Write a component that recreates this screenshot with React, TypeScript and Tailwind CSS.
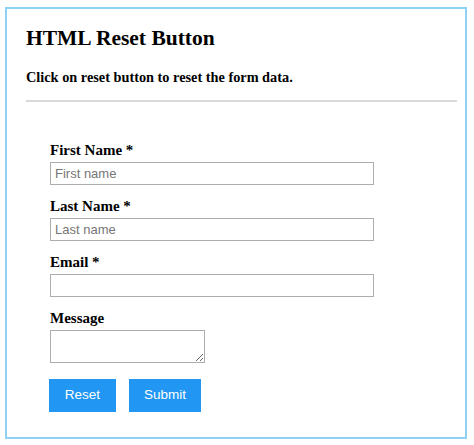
import { useState } from 'react';

const serif = "font-['Liberation_Serif','Times_New_Roman',serif]";
const sans = "font-['Liberation_Sans',Arial,sans-serif]";

const Field = ({ label, children }: { label: string; children: React.ReactNode }) => (
  <div className="flex flex-col gap-[3px] mb-[12px]">
    <label className={`${serif} text-[15px] leading-[18px] font-bold text-black`}>{label}</label>
    {children}
  </div>
);

const inputCls = `${sans} w-[324px] h-[23px] border border-[#acacac] px-[4px] text-[13px] text-black placeholder:text-[#767676] outline-none`;

export default function App() {
  const [form, setForm] = useState({ first: '', last: '', email: '', message: '' });

  return (
    <div className="bg-white w-[474px] h-[445px] pt-[7px] pl-[5px]">
      <div className="w-[462px] h-[432px] border-2 border-[#8fd0f5] pt-[17px] pl-[19px] pr-[8px]">
        <h2 className={`${serif} text-[21.5px] leading-[24px] font-bold text-black`}>HTML Reset Button</h2>
        <p className={`${serif} text-[14.3px] leading-[16px] font-bold text-black mt-[19px]`}>
          Click on reset button to reset the form data.
        </p>
        <div className="h-[2px] bg-[#d9d9d9] mt-[15px]" />

        <form
          className="pl-[24px] mt-[39px]"
          onReset={() => setForm({ first: '', last: '', email: '', message: '' })}
          onSubmit={(e) => e.preventDefault()}
        >
          <Field label="First Name *">
            <input
              className={inputCls}
              placeholder="First name"
              value={form.first}
              onChange={(e) => setForm({ ...form, first: e.target.value })}
            />
          </Field>
          <Field label="Last Name *">
            <input
              className={inputCls}
              placeholder="Last name"
              value={form.last}
              onChange={(e) => setForm({ ...form, last: e.target.value })}
            />
          </Field>
          <Field label="Email *">
            <input
              type="email"
              className={inputCls}
              value={form.email}
              onChange={(e) => setForm({ ...form, email: e.target.value })}
            />
          </Field>
          <div className="flex flex-col gap-[3px]">
            <label className={`${serif} text-[15px] leading-[18px] font-bold text-black`}>Message</label>
            <textarea
              className={`${sans} w-[155px] h-[33px] border border-[#acacac] px-[4px] text-[13px] outline-none block`}
              value={form.message}
              onChange={(e) => setForm({ ...form, message: e.target.value })}
            />
          </div>
          <div className="flex gap-[13px] mt-[16px] -ml-[1px]">
            <button type="reset" className={`${sans} w-[67px] h-[33px] bg-[#2196f3] text-white text-[13.5px]`}>
              Reset
            </button>
            <button type="submit" className={`${sans} w-[72px] h-[33px] bg-[#2196f3] text-white text-[13.5px]`}>
              Submit
            </button>
          </div>
        </form>
      </div>
    </div>
  );
}
